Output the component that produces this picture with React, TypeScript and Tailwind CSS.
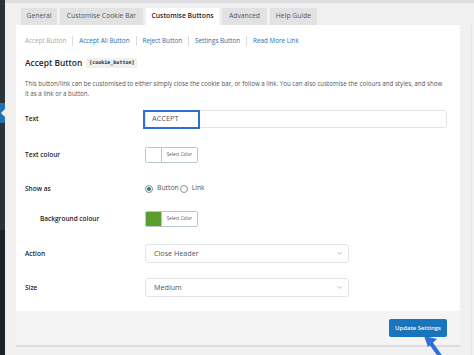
import { ChevronDown } from "lucide-react";

const font = { fontFamily: '"Open Sans", "Noto Sans", sans-serif' };

const tabs = [
  { label: "General", w: "w-[36px]" },
  { label: "Customise Cookie Bar", w: "w-[83px]" },
  { label: "Customise Buttons", w: "w-[73px]", active: true },
  { label: "Advanced", w: "w-[45px]" },
  { label: "Help Guide", w: "w-[47px]" },
];

const subLinks = ["Accept All Button", "Reject Button", "Settings Button", "Read More Link"];

const ColorPicker = ({ swatch }: { swatch: string }) => (
  <div className="flex h-[16px] w-[53px] items-stretch overflow-hidden rounded-[2px] border border-[#b9c6cc] bg-[#f6f7f7]">
    <span className={`w-[16px] border-r border-[#c3c4c7] ${swatch}`} />
    <span className="flex flex-1 items-center justify-center bg-white text-[4.6px] text-[#50575e]">
      Select Color
    </span>
  </div>
);

const Select = ({ value }: { value: string }) => (
  <div className="flex h-[19px] w-[204px] items-center justify-between rounded-[3px] border border-[#e2e4e7] bg-white pl-[8px] pr-[5px] text-[7.2px] text-[#50575e]">
    <span>{value}</span>
    <ChevronDown size={7} strokeWidth={1.5} className="text-[#50575e]" />
  </div>
);

const Row = ({
  label,
  mt,
  indent,
  children,
}: {
  label: string;
  mt: string;
  indent?: boolean;
  children: React.ReactNode;
}) => (
  <div className={`flex h-[19px] items-center ${mt}`}>
    <span
      className={`w-[120px] shrink-0 text-[6.5px] font-semibold text-[#1d2327] ${indent ? "pl-[15px]" : ""}`}
    >
      {label}
    </span>
    {children}
  </div>
);

export default function App() {
  return (
    <div style={font} className="relative flex h-[355px] w-[474px] overflow-hidden bg-[#f0f0f1]">
      {/* admin menu edge */}
      <div className="flex h-full w-[5px] shrink-0 flex-col bg-[#2c3338]">
        <div className="h-[103px]" />
        <div className="relative h-[20px] bg-[#2271b1]">
          <span className="absolute right-0 top-[6px] h-0 w-0 border-y-[4px] border-r-[4px] border-y-transparent border-r-[#f0f0f1]" />
        </div>
        <div className="h-[107px]" />
        <div className="flex-1 bg-[#1d2327]" />
      </div>

      <div className="flex flex-1 flex-col border-t-[3px] border-[#dcdcde] pl-[11px]">
        <div className="flex pr-[12px]">
          <div className="flex w-[444px] flex-col">
            {/* tabs */}
            <div className="mt-[5px] flex h-[17px] items-stretch gap-[3px] pl-[5px]">
              {tabs.map((t) => (
                <div
                  key={t.label}
                  className={`${t.w} flex items-center justify-center whitespace-nowrap text-[6.8px] ${
                    t.active
                      ? "bg-white font-semibold text-[#1d2327]"
                      : "bg-[#e2e2e3] text-[#50575e]"
                  }`}
                >
                  {t.label}
                </div>
              ))}
            </div>

            {/* panel */}
            <div className="flex flex-col bg-white">
              <div className="flex h-[286px] flex-col pl-[9px]">
                <div className="mt-[11px] flex h-[10px] items-center text-[6.3px]">
                  <span className="pr-[6px] text-[#a7aaad]">Accept Button</span>
                  {subLinks.map((l) => (
                    <span key={l} className="border-l border-[#dcdcde] px-[6px] text-[#2271b1]">
                      {l}
                    </span>
                  ))}
                </div>

                <div className="mt-[11px] flex h-[12px] items-center gap-[4px]">
                  <span className="text-[8.4px] font-semibold text-[#1d2327]">Accept Button</span>
                  <code
                    style={{ fontFamily: '"DejaVu Sans Mono", monospace' }}
                    className="bg-[#f0f0f1] px-[3px] py-[1px] text-[5px] font-bold text-[#1d2327]"
                  >
                    [cookie_button]
                  </code>
                </div>

                <p className="mt-[10px] whitespace-nowrap text-[6.2px] leading-[9.5px] text-[#50575e]">
                  This button/link can be customised to either simply close the cookie bar, or follow a link. You can
                  also customise the colours and styles, and show
                  <br />
                  it as a link or a button.
                </p>

                <Row label="Text" mt="mt-[11px]">
                  <div className="relative flex h-[18px] w-[302px] items-center rounded-[3px] border border-[#e2e4e7] bg-white pl-[6px] text-[7.4px] text-[#50575e]">
                    ACCEPT
                    <span className="absolute -left-[3px] -top-[1px] h-[19px] w-[57px] border-[2px] border-[#2f6fcf]" />
                  </div>
                </Row>

                <Row label="Text colour" mt="mt-[17px]">
                  <ColorPicker swatch="bg-white" />
                </Row>

                <Row label="Show as" mt="mt-[15px]">
                  <div className="flex items-center text-[6.8px] text-[#50575e]">
                    <span className="flex h-[8px] w-[8px] items-center justify-center rounded-full border border-[#8c8f94] bg-white">
                      <span className="h-[4px] w-[4px] rounded-full bg-[#2a7a8c]" />
                    </span>
                    <span className="ml-[4px]">Button</span>
                    <span className="ml-[1px] h-[8px] w-[8px] rounded-full border border-[#8c8f94] bg-white" />
                    <span className="ml-[4px]">Link</span>
                  </div>
                </Row>

                <Row label="Background colour" mt="mt-[11px]" indent>
                  <ColorPicker swatch="bg-[#5a9e2c]" />
                </Row>

                <Row label="Action" mt="mt-[16px]">
                  <Select value="Close Header" />
                </Row>

                <Row label="Size" mt="mt-[15px]">
                  <Select value="Medium" />
                </Row>
              </div>

              {/* footer */}
              <div className="flex h-[36px] justify-end border-b-[2px] border-[#dcdcde] bg-[#f4f4f4] pr-[13px] pt-[8px]">
                <button className="h-[18px] w-[58px] rounded-[2px] bg-[#1675bd] text-[6px] font-semibold text-white">
                  Update Settings
                </button>
              </div>
            </div>
          </div>
        </div>
      </div>

      {/* right-hand column edge */}
      <div className="absolute right-[2px] top-[25px] h-[330px] w-px bg-[#e6e6e7]" />

      {/* annotation arrow */}
      <svg className="absolute left-[416px] top-[332px]" width="34" height="24" viewBox="0 0 34 24">
        <path d="M24 24 L14 10" stroke="#2f6fd6" strokeWidth="4" strokeLinecap="round" />
        <path d="M8 4 L21 7 L12 15 Z" fill="#2f6fd6" />
      </svg>
    </div>
  );
}
